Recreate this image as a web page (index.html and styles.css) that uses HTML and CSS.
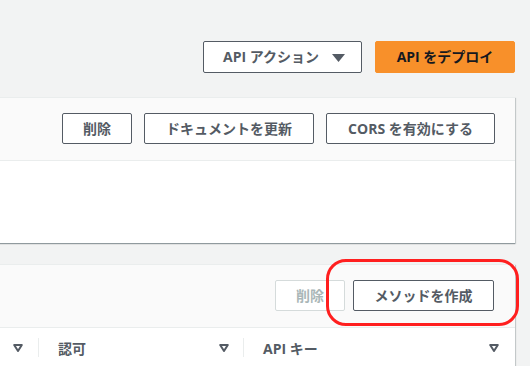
FILE: index.html
```html
<!DOCTYPE html>
<html lang="ja">
<head>
<meta charset="utf-8">
<title>API Gateway</title>
<link rel="stylesheet" href="styles.css">
</head>
<body>
<div class="page">
  <div class="toolbar">
    <button class="btn btn-dropdown">API アクション
      <svg class="caret" width="13" height="8" viewBox="0 0 13 8"><path d="M0 0H13L6.5 8Z" fill="#545b64"/></svg>
    </button>
    <button class="btn btn-primary">API をデプロイ</button>
  </div>

  <section class="panel">
    <div class="panel-header">
      <button class="btn btn-sm">削除</button>
      <button class="btn btn-sm">ドキュメントを更新</button>
      <button class="btn btn-sm">CORS を有効にする</button>
    </div>
    <div class="panel-body"></div>
  </section>

  <section class="panel panel-methods">
    <div class="panel-header">
      <button class="btn btn-sm btn-disabled">削除</button>
      <button class="btn btn-sm btn-create">メソッドを作成</button>
      <span class="highlight"></span>
    </div>
    <div class="table-head">
      <div class="col col-first">
        <span></span>
        <svg class="sort" width="10" height="8" viewBox="0 0 10 8"><path d="M1.2 1H8.8L5 7Z" fill="none" stroke="#545b64" stroke-width="2" stroke-linejoin="round"/></svg>
      </div>
      <div class="col">
        <span class="col-title">認可</span>
        <svg class="sort" width="10" height="8" viewBox="0 0 10 8"><path d="M1.2 1H8.8L5 7Z" fill="none" stroke="#545b64" stroke-width="2" stroke-linejoin="round"/></svg>
      </div>
      <div class="col">
        <span class="col-title">API キー</span>
        <svg class="sort" width="10" height="8" viewBox="0 0 10 8"><path d="M1.2 1H8.8L5 7Z" fill="none" stroke="#545b64" stroke-width="2" stroke-linejoin="round"/></svg>
      </div>
    </div>
  </section>
</div>
</body>
</html>
```

FILE: styles.css
```css
* { box-sizing: border-box; }

html, body {
  margin: 0;
  padding: 0;
  background: #f2f3f3;
  overflow: hidden;
}

body {
  font-family: "Open Sans", "Noto Sans CJK JP", sans-serif;
  color: #545b64;
  width: 530px;
  height: 366px;
}

.page {
  padding: 41px 15px 0 0;
}

.toolbar {
  display: flex;
  justify-content: flex-end;
  gap: 13px;
  margin-bottom: 24px;
}

.btn {
  font-family: "Open Sans", "Noto Sans CJK JP", sans-serif;
  font-weight: 700;
  font-size: 14px;
  color: #545b64;
  background: #fff;
  border: 1px solid #545b64;
  border-radius: 2px;
  height: 32px;
  padding: 0 20px;
  display: inline-flex;
  align-items: center;
  justify-content: center;
  line-height: 1;
  white-space: nowrap;
}

.btn-dropdown {
  width: 159px;
  padding: 0 16px 0 19px;
  justify-content: space-between;
}

.caret { display: block; margin-top: 1px; }

.btn-primary {
  width: 140px;
  background: #f8902a;
  border-color: #f8902a;
  color: #16191f;
}

.btn-sm {
  height: 31px;
}

.btn-disabled {
  width: 70px;
  color: #aab7b8;
  border-color: #d5dbdb;
}

.btn-create {
  width: 141px;
}

.panel {
  margin-left: -10px;
  background: #fff;
  border-top: 1px solid #eaeded;
  box-shadow: 0 1px 1px 0 rgba(0, 28, 36, 0.3), 1px 1px 1px 0 rgba(0, 28, 36, 0.15);
}

.panel + .panel {
  margin-top: 21px;
}

.panel-header {
  position: relative;
  display: flex;
  justify-content: flex-end;
  gap: 12px;
  padding: 15px 20px 16px 0;
  background: #fafafa;
  border-bottom: 1px solid #eaeded;
}

.panel-header .btn-sm:nth-child(1):not(.btn-disabled) { width: 70px; }
.panel-header .btn-sm:nth-child(2):not(.btn-create) { width: 170px; }
.panel-header .btn-sm:nth-child(3) { width: 169px; }

.panel-methods .panel-header {
  gap: 8px;
  padding-right: 21px;
}

.panel-body {
  height: 82px;
}

.highlight {
  position: absolute;
  left: 336px;
  top: -6px;
  width: 193px;
  height: 67px;
  border: 3.5px solid #ff1f1f;
  border-radius: 20px;
  pointer-events: none;
}

.table-head {
  display: grid;
  grid-template-columns: 48px 205px 1fr;
  height: 40px;
  background: #fff;
}

.col {
  position: relative;
  display: flex;
  align-items: center;
  justify-content: space-between;
  padding: 0 14px 0 20px;
}

.col:last-child { padding-right: 16px; }

.col + .col::before {
  content: "";
  position: absolute;
  left: 0;
  top: 10px;
  height: 19px;
  border-left: 1px solid #eaeded;
}

.col-first { padding-left: 0; padding-right: 15px; }

.col-title {
  font-weight: 700;
  font-size: 14px;
  color: #545b64;
}

.sort { display: block; }
```
